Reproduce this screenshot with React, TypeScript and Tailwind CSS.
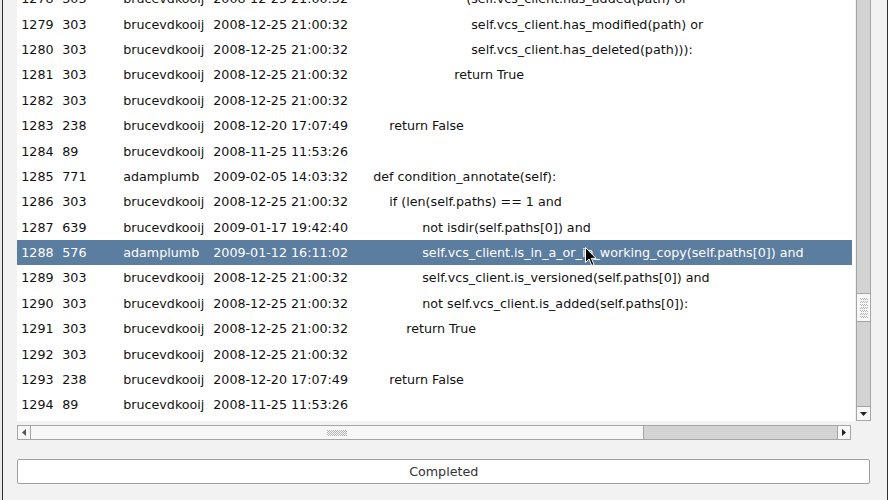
import React from 'react';

type Row = { n: number; rev: number; author: string; date: string; code: string; indent: number };

const rows: Row[] = [
  { n: 1278, rev: 303, author: 'brucevdkooij', date: '2008-12-25 21:00:32', code: '(self.vcs_client.has_added(path) or', indent: 93 },
  { n: 1279, rev: 303, author: 'brucevdkooij', date: '2008-12-25 21:00:32', code: 'self.vcs_client.has_modified(path) or', indent: 98 },
  { n: 1280, rev: 303, author: 'brucevdkooij', date: '2008-12-25 21:00:32', code: 'self.vcs_client.has_deleted(path))):', indent: 98 },
  { n: 1281, rev: 303, author: 'brucevdkooij', date: '2008-12-25 21:00:32', code: 'return True', indent: 81 },
  { n: 1282, rev: 303, author: 'brucevdkooij', date: '2008-12-25 21:00:32', code: '', indent: 0 },
  { n: 1283, rev: 238, author: 'brucevdkooij', date: '2008-12-20 17:07:49', code: 'return False', indent: 16 },
  { n: 1284, rev: 89, author: 'brucevdkooij', date: '2008-11-25 11:53:26', code: '', indent: 0 },
  { n: 1285, rev: 771, author: 'adamplumb', date: '2009-02-05 14:03:32', code: 'def condition_annotate(self):', indent: 0 },
  { n: 1286, rev: 303, author: 'brucevdkooij', date: '2008-12-25 21:00:32', code: 'if (len(self.paths) == 1 and', indent: 16 },
  { n: 1287, rev: 639, author: 'brucevdkooij', date: '2009-01-17 19:42:40', code: 'not isdir(self.paths[0]) and', indent: 49 },
  { n: 1288, rev: 576, author: 'adamplumb', date: '2009-01-12 16:11:02', code: 'self.vcs_client.is_in_a_or_in_working_copy(self.paths[0]) and', indent: 49 },
  { n: 1289, rev: 303, author: 'brucevdkooij', date: '2008-12-25 21:00:32', code: 'self.vcs_client.is_versioned(self.paths[0]) and', indent: 49 },
  { n: 1290, rev: 303, author: 'brucevdkooij', date: '2008-12-25 21:00:32', code: 'not self.vcs_client.is_added(self.paths[0]):', indent: 49 },
  { n: 1291, rev: 303, author: 'brucevdkooij', date: '2008-12-25 21:00:32', code: 'return True', indent: 33 },
  { n: 1292, rev: 303, author: 'brucevdkooij', date: '2008-12-25 21:00:32', code: '', indent: 0 },
  { n: 1293, rev: 238, author: 'brucevdkooij', date: '2008-12-20 17:07:49', code: 'return False', indent: 16 },
  { n: 1294, rev: 89, author: 'brucevdkooij', date: '2008-11-25 11:53:26', code: '', indent: 0 },
];

const Grip: React.FC<{ vertical?: boolean }> = ({ vertical }) => (
  <svg width={vertical ? 8 : 20} height={vertical ? 20 : 6} className="opacity-70">
    {Array.from({ length: vertical ? 20 : 6 }).map((_, i) =>
      Array.from({ length: vertical ? 8 : 20 }).map((__, j) =>
        (i + j) % 2 === 0 && (vertical ? i % 3 !== 2 : true) ? (
          <rect key={`${i}-${j}`} x={j} y={i} width={1} height={1} fill="#9a9a9a" />
        ) : null
      )
    )}
  </svg>
);

const App: React.FC = () => {
  return (
    <div className="w-[888px] h-[500px] bg-[#f2f2f2] flex overflow-hidden font-['DejaVu_Sans',sans-serif] text-[12.7px] text-[#111]">
      {/* window border left */}
      <div className="w-[2px] bg-[#eaeaea]" />
      <div className="w-px bg-[#2e2e2e]" />

      <div className="flex-1 flex flex-col pl-[15px] pr-[16px]">
        {/* list + vertical scrollbar */}
        <div className="flex h-[421px]">
          <div className="w-[838px] bg-white overflow-hidden relative">
            <div className="mt-[-14px] flex flex-col">
              {rows.map((r) => {
                const sel = r.n === 1288;
                return (
                  <div
                    key={r.n}
                    className={`h-[25.4px] w-[835px] shrink-0 flex items-center whitespace-pre ${sel ? 'bg-[#5b7da0] text-white' : ''}`}
                  >
                    <span className="w-[45px] shrink-0 pl-[4px]">{r.n}</span>
                    <span className="w-[61px] shrink-0">{r.rev}</span>
                    <span className="w-[90px] shrink-0">{r.author}</span>
                    <span className="w-[160px] shrink-0">{r.date}</span>
                    <span className="shrink-0" style={{ paddingLeft: r.indent }}>{r.code}</span>
                  </div>
                );
              })}
            </div>
            {/* mouse pointer */}
            <svg className="absolute left-[568px] top-[247px]" width="13" height="20" viewBox="0 0 13 20">
              <path d="M0.5 0.5 L0.5 15.5 L4 12 L6.8 18.5 L9 17.6 L6.3 11.3 L11 11.3 Z" fill="#000" stroke="#fff" strokeWidth="1" />
            </svg>
          </div>

          {/* vertical scrollbar */}
          <div className="w-[15px] ml-[1px] bg-[#d3d3d3] border-x border-[#a5a5a5] flex flex-col">
            <div className="h-[293px]" />
            <div className="h-[29px] bg-[#f7f7f7] border-y border-[#a5a5a5] flex items-center justify-center">
              <Grip vertical />
            </div>
            <div className="flex-1" />
            <div className="h-[15px] bg-[#f7f7f7] border-y border-[#a5a5a5] flex items-center justify-center">
              <svg width="7" height="4"><path d="M0 0 H7 L3.5 4 Z" fill="#222" /></svg>
            </div>
          </div>
        </div>

        {/* horizontal scrollbar */}
        <div className="mt-[4px] w-[834px] h-[15px] flex bg-[#d3d3d3] border-y border-[#a5a5a5]">
          <div className="w-[14px] bg-[#f7f7f7] border-l border-r border-[#a5a5a5] flex items-center justify-center">
            <svg width="4" height="7"><path d="M4 0 V7 L0 3.5 Z" fill="#555" /></svg>
          </div>
          <div className="w-[613px] bg-[#f7f7f7] border-r border-[#a5a5a5] flex items-center justify-center">
            <Grip />
          </div>
          <div className="flex-1" />
          <div className="w-[14px] bg-[#f7f7f7] border-l border-r border-[#a5a5a5] flex items-center justify-center">
            <svg width="4" height="7"><path d="M0 0 V7 L4 3.5 Z" fill="#222" /></svg>
          </div>
        </div>

        {/* progress bar */}
        <div className="mt-[19px] w-[853px] h-[25px] bg-white border border-[#9f9f9f] rounded-[2px] flex items-center justify-center text-[#333]">
          Completed
        </div>
      </div>

      <div className="w-px bg-[#2e2e2e]" />
    </div>
  );
};

export default App;
